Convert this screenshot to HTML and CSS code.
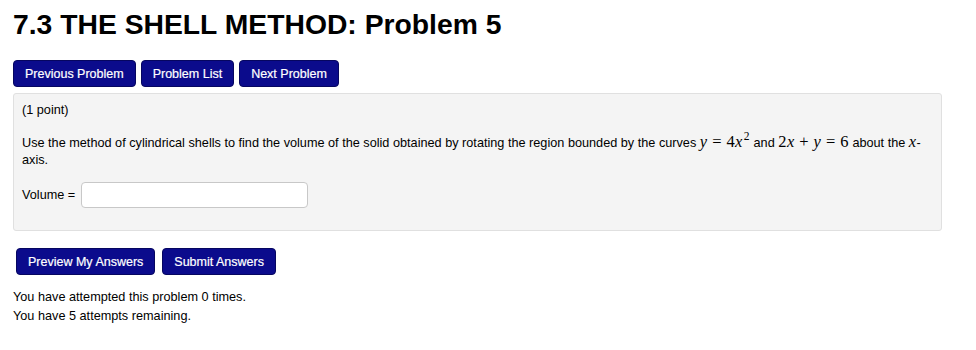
FILE: index.html
```html
<!DOCTYPE html>
<html>
<head>
<meta charset="utf-8">
<link rel="stylesheet" href="styles.css">
</head>
<body>
<h1 class="title">7.3 THE SHELL METHOD: Problem 5</h1>
<div class="nav">
  <button class="btn">Previous Problem</button>
  <button class="btn">Problem List</button>
  <button class="btn">Next Problem</button>
</div>
<div class="problem">
  <p class="points">(1 point)</p>
  <p class="statement">Use the method of cylindrical shells to find the volume of the solid obtained by rotating the region bounded by the curves <span class="math"><i>y</i><span class="op">=</span>4<i>x</i><sup>2</sup></span> and <span class="math">2<i>x</i><span class="op">+</span><i>y</i><span class="op">=</span>6</span> about the <span class="math"><i>x</i></span>-axis.</p>
  <div class="answer">
    <span>Volume =</span>
    <input class="field" type="text">
  </div>
</div>
<div class="submit">
  <button class="btn">Preview My Answers</button>
  <button class="btn">Submit Answers</button>
</div>
<div class="attempts">
  <div>You have attempted this problem 0 times.</div>
  <div>You have 5 attempts remaining.</div>
</div>
</body>
</html>
```

FILE: styles.css
```css
html, body {
  margin: 0;
  padding: 0;
  background: #fff;
}
body {
  font-family: "Liberation Sans", Arial, sans-serif;
  font-size: 12.7px;
  color: #000;
  padding: 0 13px;
  width: 929px;
}
.title {
  margin: 0;
  padding-top: 8px;
  font-size: 28.3px;
  font-weight: bold;
  line-height: 33px;
}
.nav {
  display: flex;
  gap: 5px;
  margin-top: 19px;
}
.btn {
  background: #0b0b8c;
  color: #fff;
  border: 1px solid #060660;
  border-radius: 4px;
  font-family: "Liberation Sans", Arial, sans-serif;
  font-size: 12.5px;
  height: 27px;
  padding: 0 11px;
  cursor: pointer;
  -webkit-text-stroke: 0.2px #fff;
}
.problem {
  margin-top: 6px;
  background: #f4f4f4;
  border: 1px solid #e0e0e0;
  border-radius: 3px;
  padding: 7px 8px 21px 8px;
  height: 108px;
}
.points {
  margin: 0;
  line-height: 18px;
}
.statement {
  margin: 14px 0 0 0;
  line-height: 17px;
}
.math {
  font-family: "Liberation Serif", "Times New Roman", serif;
  font-size: 16.5px;
  letter-spacing: 0.4px;
}
.math .op {
  margin: 0 0.28em;
}
.math sup {
  font-size: 11.5px;
  vertical-align: 7px;
  line-height: 0;
  margin-left: 1px;
}
.answer {
  display: flex;
  align-items: center;
  gap: 6px;
  margin-top: 13px;
}
.field {
  width: 227px;
  height: 26px;
  box-sizing: border-box;
  border: 1px solid #c8c8c8;
  border-radius: 4px;
  background: #fff;
  margin: 0;
}
.submit {
  display: flex;
  gap: 7px;
  margin-top: 17px;
  padding-left: 3px;
}
.attempts {
  margin-top: 13px;
  line-height: 19px;
}
```
